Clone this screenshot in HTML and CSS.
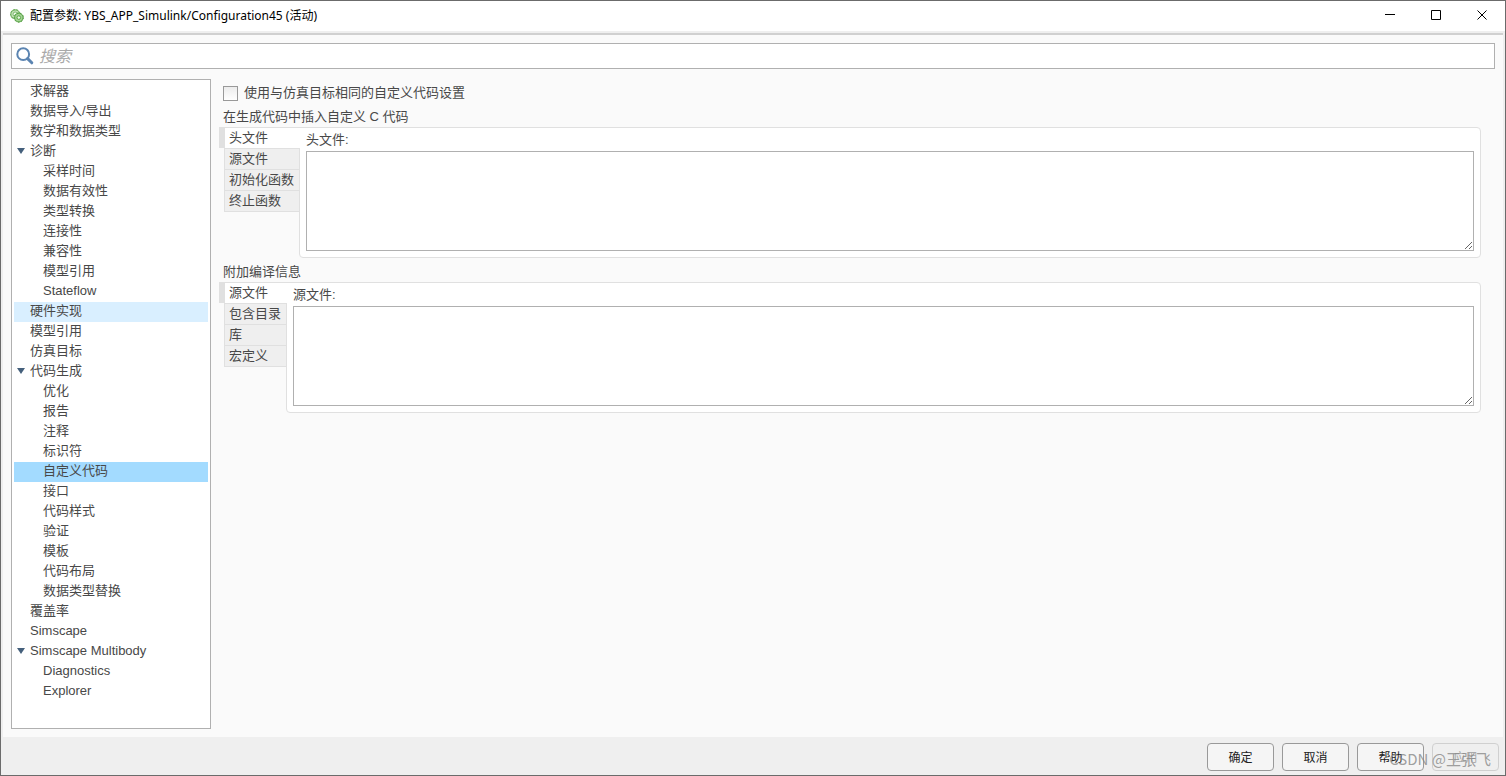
FILE: index.html
```html
<!DOCTYPE html>
<html lang="zh-CN">
<head>
    <meta charset="utf-8">
    <title>配置参数: YBS_APP_Simulink/Configuration45 (活动)</title>
    <link rel="stylesheet" href="styles.css">
</head>
<body>
    <header class="titlebar">
        <svg class="app-icon" width="14" height="14" viewBox="0 0 14 14">
            <circle cx="5.2" cy="5.2" r="4.4" fill="#c7e4bd" stroke="#7dba6d" stroke-width="1.2"/>
            <circle cx="5.2" cy="5.2" r="4.6" fill="none" stroke="#63a653" stroke-dasharray="1.6 1.6"/>
            <circle cx="5.2" cy="5.2" r="2.2" fill="#f1faee" stroke="#7dba6d"/>
            <circle cx="8.8" cy="8.6" r="4.2" fill="#a4d495" stroke="#6fb35e" stroke-width="1.2"/>
            <circle cx="8.8" cy="8.6" r="4.6" fill="none" stroke="#4c953c" stroke-dasharray="1.6 1.6"/>
            <circle cx="8.8" cy="8.6" r="1.8" fill="#e6f5e0" stroke="#5aa548"/>
        </svg>
        <h1 class="title">配置参数: YBS_APP_Simulink/Configuration45 (活动)</h1>
        <div class="window-buttons">
            <button type="button" aria-label="最小化"><svg width="11" height="11" viewBox="0 0 11 11"><path d="M0 4.5h10"/></svg></button>
            <button type="button" aria-label="最大化"><svg width="11" height="11" viewBox="0 0 11 11"><path d="M.5.5h9v9h-9z"/></svg></button>
            <button type="button" aria-label="关闭"><svg width="11" height="11" viewBox="0 0 11 11"><path d="M.5.5l9 9M9.5.5l-9 9"/></svg></button>
        </div>
    </header>

    <main class="content">
        <label class="search">
            <svg width="18" height="18" viewBox="0 0 18 18">
                <circle cx="7.2" cy="7.2" r="5.9" fill="none" stroke="#5b84b1" stroke-width="2"/>
                <path d="M11.6 11.6l4.2 4.2" stroke="#5b84b1" stroke-width="3" stroke-linecap="round"/>
            </svg>
            <input type="search" placeholder="搜索" aria-label="搜索">
        </label>

        <div class="columns">
            <nav class="tree">
                <ul>
                    <li><a href="#">求解器</a></li>
                    <li><a href="#">数据导入/导出</a></li>
                    <li><a href="#">数学和数据类型</a></li>
                    <li class="open"><a href="#">诊断</a>
                        <ul>
                            <li><a href="#">采样时间</a></li>
                            <li><a href="#">数据有效性</a></li>
                            <li><a href="#">类型转换</a></li>
                            <li><a href="#">连接性</a></li>
                            <li><a href="#">兼容性</a></li>
                            <li><a href="#">模型引用</a></li>
                            <li><a href="#">Stateflow</a></li>
                        </ul>
                    </li>
                    <li><a href="#" class="hover">硬件实现</a></li>
                    <li><a href="#">模型引用</a></li>
                    <li><a href="#">仿真目标</a></li>
                    <li class="open"><a href="#">代码生成</a>
                        <ul>
                            <li><a href="#">优化</a></li>
                            <li><a href="#">报告</a></li>
                            <li><a href="#">注释</a></li>
                            <li><a href="#">标识符</a></li>
                            <li><a href="#" class="selected">自定义代码</a></li>
                            <li><a href="#">接口</a></li>
                            <li><a href="#">代码样式</a></li>
                            <li><a href="#">验证</a></li>
                            <li><a href="#">模板</a></li>
                            <li><a href="#">代码布局</a></li>
                            <li><a href="#">数据类型替换</a></li>
                        </ul>
                    </li>
                    <li><a href="#">覆盖率</a></li>
                    <li><a href="#">Simscape</a></li>
                    <li class="open"><a href="#">Simscape Multibody</a>
                        <ul>
                            <li><a href="#">Diagnostics</a></li>
                            <li><a href="#">Explorer</a></li>
                        </ul>
                    </li>
                </ul>
            </nav>

            <form class="settings">
                <label class="check"><input type="checkbox">使用与仿真目标相同的自定义代码设置</label>

                <section class="group">
                    <h2>在生成代码中插入自定义 C 代码</h2>
                    <div class="tabbed">
                        <div class="tabs" role="tablist">
                            <button type="button" role="tab" aria-selected="true">头文件</button>
                            <button type="button" role="tab">源文件</button>
                            <button type="button" role="tab">初始化函数</button>
                            <button type="button" role="tab">终止函数</button>
                        </div>
                        <div class="panel" role="tabpanel">
                            <label for="header-file">头文件:</label>
                            <textarea id="header-file"></textarea>
                        </div>
                    </div>
                </section>

                <section class="group">
                    <h2>附加编译信息</h2>
                    <div class="tabbed">
                        <div class="tabs" role="tablist">
                            <button type="button" role="tab" aria-selected="true">源文件</button>
                            <button type="button" role="tab">包含目录</button>
                            <button type="button" role="tab">库</button>
                            <button type="button" role="tab">宏定义</button>
                        </div>
                        <div class="panel" role="tabpanel">
                            <label for="source-file">源文件:</label>
                            <textarea id="source-file"></textarea>
                        </div>
                    </div>
                </section>
            </form>
        </div>
    </main>

    <footer class="footer">
        <button type="button">确定</button>
        <button type="button">取消</button>
        <button type="button">帮助</button>
        <button type="button" disabled>应用</button>
        <span class="watermark">CSDN @王张飞</span>
    </footer>
</body>
</html>
```
FILE: styles.css
```css
* {
    box-sizing: border-box;
}
body {
    margin: 0;
    min-height: 100vh;
    display: flex;
    flex-direction: column;
    border: 1px solid #6b6b6b;
    background-color: #efefef;
    color: #484848;
    font-family: "Liberation Sans", "Noto Sans CJK SC", sans-serif;
    font-size: 13px;
}
button, input, textarea {
    font: inherit;
    color: inherit;
}
ul {
    list-style: none;
    margin: 0;
    padding: 0;
}

/* title bar */
.titlebar {
    display: flex;
    align-items: center;
    height: 30px;
    padding-left: 9px;
    background-color: #fff;
}
.title {
    flex: 1;
    margin: 0 0 0 6px;
    color: #000;
    font-family: "Noto Sans", "Noto Sans CJK SC", sans-serif;
    font-size: 12px;
    font-weight: normal;
    line-height: 16px;
}
.window-buttons {
    display: flex;
    height: 100%;
}
.window-buttons button {
    width: 46px;
    padding: 0 0 2px;
    border: none;
    background: none;
}
.window-buttons svg {
    display: block;
    margin: 0 auto;
    fill: none;
    stroke: #000;
}

/* main area */
.content {
    flex: 1;
    display: flex;
    flex-direction: column;
    gap: 10px;
    margin: 2px 2px 0;
    padding: 8px;
    border-top: 2px solid #d0d0d0;
    background-color: #fafafa;
}
.search {
    display: flex;
    align-items: center;
    gap: 5px;
    height: 26px;
    padding-left: 4px;
    border: 1px solid #b0b0b0;
    background-color: #fff;
}
.search input {
    flex: 1;
    height: 24px;
    padding: 2px 0 0;
    border: none;
    outline: none;
    background: none;
    font-size: 16px;
}
.search input::placeholder {
    color: #a9a9a9;
    font-style: italic;
}
.columns {
    flex: 1;
    display: flex;
    gap: 8px;
}

/* tree */
.tree {
    width: 200px;
    padding: 2px;
    border: 1px solid #b0b0b0;
    background-color: #fff;
}
.tree a {
    display: block;
    height: 20px;
    padding-left: 16px;
    line-height: 18px;
    color: inherit;
    text-decoration: none;
}
.tree ul ul a {
    padding-left: 29px;
}
.tree .open > a {
    display: flex;
    align-items: center;
    gap: 5px;
    padding: 0 0 2px 3px;
}
.tree .open > a::before {
    content: "";
    border: 4px solid transparent;
    border-top: 6px solid #45607c;
    border-bottom: none;
}
.tree .hover {
    background-color: #d9efff;
}
.tree .selected {
    background-color: #a3dbff;
}

/* settings */
.settings {
    flex: 1;
    padding: 4px 14px 0 0;
}
.check {
    display: flex;
    align-items: center;
    gap: 6px;
    height: 20px;
    margin-left: 4px;
    line-height: 18px;
}
.check input {
    appearance: none;
    width: 15px;
    height: 15px;
    margin: 0;
    border: 1px solid #999;
    background: linear-gradient(#ececec, #fff);
}
.group {
    margin-bottom: 4px;
}
.group h2 {
    height: 20px;
    margin: 0 0 0 4px;
    font-size: 13px;
    font-weight: normal;
    line-height: 20px;
}
.check + .group h2 {
    height: 24px;
    padding-top: 4px;
}
.tabbed {
    display: flex;
    align-items: stretch;
}
.tabs {
    display: flex;
    flex-direction: column;
    z-index: 1;
}
.tabs button {
    height: 21px;
    margin-left: 5px;
    padding: 0 5px 0 4px;
    border: 1px solid #e0e0e0;
    border-bottom: none;
    background-color: #efefef;
    line-height: 18px;
    text-align: left;
}
.tabs button:last-child {
    height: 22px;
    border-bottom: 1px solid #e0e0e0;
}
.tabs button[aria-selected="true"] {
    margin: 0 -1px 0 0;
    border-left-width: 6px;
    border-right: none;
    background-color: #fff;
}
.panel {
    flex: 1;
    margin-left: -1px;
    padding: 3px 6px 6px;
    border: 1px solid #e0e0e0;
    border-radius: 0 4px 4px 4px;
    background-color: #fff;
}
.panel label {
    display: block;
    height: 20px;
    line-height: 18px;
}
.panel textarea {
    display: block;
    width: 100%;
    height: 100px;
    border: 1px solid #b0b0b0;
    background-color: #fff;
    outline: none;
}

/* footer */
.footer {
    position: relative;
    display: flex;
    justify-content: flex-end;
    gap: 8px;
    padding: 6px 6px 4px;
}
.footer button {
    width: 67px;
    height: 28px;
    padding: 0 0 2px;
    border: 1px solid #999;
    border-radius: 4px;
    background-color: #f5f5f5;
    color: #222;
    font-size: 12px;
}
.footer button:disabled {
    border-color: #d0d0d0;
    background-color: #efefef;
    color: #aaa;
}
.watermark {
    position: absolute;
    right: 14px;
    bottom: 6px;
    color: #888c;
    font-family: "Noto Sans CJK SC", sans-serif;
    font-size: 15px;
    line-height: 20px;
}
```
